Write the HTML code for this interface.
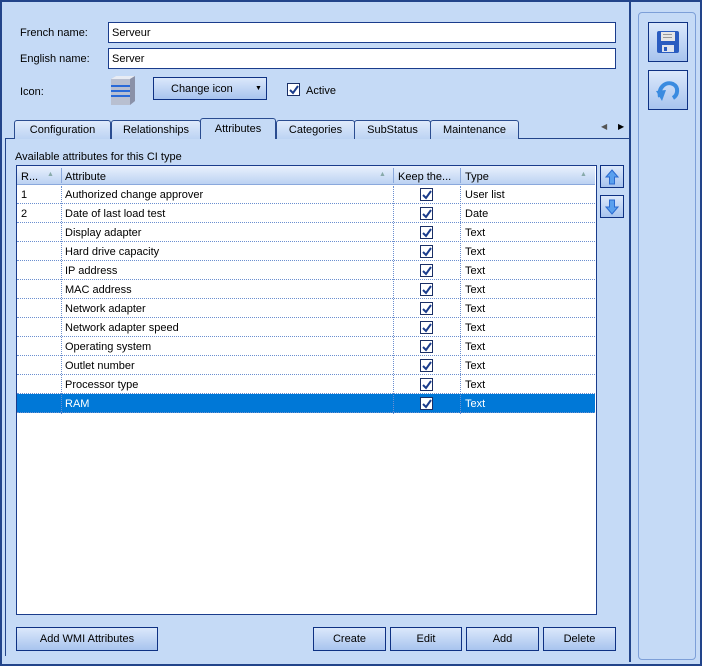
<!DOCTYPE html>
<html><head><style>
*{box-sizing:border-box;margin:0;padding:0}
body{width:702px;height:666px;position:relative;background:#c5daf6;font-family:"Liberation Sans",sans-serif;font-size:11px;color:#000;overflow:hidden}
.a{position:absolute}
.outer{left:0;top:0;width:702px;height:666px;border:2px solid #22448a;border-top-width:2px}
.inp{background:#fff;border:1px solid #1a3c8c;height:21px;padding:3px 3px;line-height:14px}
.btn{border:1px solid #0e3183;background:linear-gradient(#dbe8fb,#a8c4ee);text-align:center;line-height:21px}
.b24{line-height:23px}
.cb{width:13px;height:13px;border:1px solid #1a2f66;background:#fff}
.cb svg{position:absolute;left:1px;top:1px}
.tab{top:120px;height:19px;border:1px solid #2a4c90;border-bottom:none;background:linear-gradient(#dfeafb,#bcd3f3);text-align:center;line-height:18px;border-radius:3px 3px 0 0}
.row{left:17px;width:578px;height:19px;border-bottom:1px dotted #6b8fd0}
.row span{position:absolute;top:4px}
.vl{top:186px;width:0;height:228px;border-left:1px dotted #6b8fd0}
</style></head><body>
<div class="a outer"></div>
<div class="a" style="left:629px;top:2px;width:2px;height:660px;background:#22448a"></div>
<div class="a" style="left:638px;top:12px;width:58px;height:648px;border:1px solid #7d9fd8;border-radius:4px"></div>
<div class="a btn" style="left:648px;top:22px;width:40px;height:40px">
<svg width="26" height="26" viewBox="0 0 26 26" style="margin-top:6px"><rect x="2" y="2" width="22" height="22" rx="2" fill="#2a5cc0"/><rect x="6" y="3" width="14" height="9" fill="#e6e6e6"/><rect x="8" y="5" width="9" height="1" fill="#999"/><rect x="8" y="8" width="9" height="1" fill="#999"/><rect x="7" y="16" width="12" height="7" fill="#dfe4ee"/><rect x="9" y="18" width="3" height="4" fill="#2a5cc0"/></svg></div>
<div class="a btn" style="left:648px;top:70px;width:40px;height:40px">
<svg width="28" height="26" viewBox="0 0 28 26" style="margin-top:6px"><path d="M6 20 C4 10 12 4 19 7 C25 10 24 18 19 21" fill="none" stroke="#3a8be0" stroke-width="4"/><path d="M2 14 L8 24 L12 13 Z" fill="#3a8be0"/></svg></div>

<div class="a" style="left:20px;top:27px">French name:</div>
<div class="a inp" style="left:108px;top:22px;width:508px">Serveur</div>
<div class="a" style="left:20px;top:53px">English name:</div>
<div class="a inp" style="left:108px;top:48px;width:508px">Server</div>
<div class="a" style="left:20px;top:86px">Icon:</div>
<svg class="a" style="left:108px;top:75px" width="28" height="32" viewBox="0 0 28 32"><path d="M3 4 L8 1 L27 1 L27 26 L22 30 L3 30 Z" fill="#b8bfd0"/><path d="M3 4 L8 1 L27 1 L22 4 Z" fill="#e8ecf4"/><path d="M22 4 L27 1 L27 26 L22 30 Z" fill="#8a91a8"/><rect x="3" y="10" width="19" height="2" fill="#2a6ad8"/><rect x="3" y="15" width="19" height="2" fill="#2a6ad8"/><rect x="3" y="20" width="19" height="2" fill="#2a6ad8"/></svg>
<div class="a btn" style="left:153px;top:77px;width:114px;height:23px;text-align:left;padding-left:17px;line-height:22px">Change icon<span style="position:absolute;left:101px;top:0;font-size:7px">▼</span></div>
<div class="a cb" style="left:287px;top:83px"><svg width="10" height="10"><path d="M1 5 L4 8 L9 1" stroke="#1a3c8c" stroke-width="2" fill="none"/></svg></div>
<div class="a" style="left:306px;top:85px">Active</div>

<div class="a" style="left:5px;top:138px;width:626px;height:518px;border:1px solid #22448a;border-bottom:none;border-right:none"></div>
<div class="a tab" style="left:14px;width:97px">Configuration</div>
<div class="a tab" style="left:111px;width:90px">Relationships</div>
<div class="a tab" style="left:200px;width:76px;top:118px;height:21px;background:#c5daf6;z-index:2;line-height:20px">Attributes</div>
<div class="a tab" style="left:276px;width:79px">Categories</div>
<div class="a tab" style="left:354px;width:77px">SubStatus</div>
<div class="a tab" style="left:430px;width:89px">Maintenance</div>
<div class="a" style="left:601px;top:122px;font-size:8px;color:#555">◀</div>
<div class="a" style="left:618px;top:122px;font-size:8px">▶</div>

<div class="a" style="left:15px;top:151px">Available attributes for this CI type</div>
<div class="a" style="left:16px;top:165px;width:581px;height:450px;background:#fff;border:1px solid #1a3c8c"></div>
<div class="a" style="left:17px;top:166px;width:578px;height:19px;background:linear-gradient(#e9f1fd,#bcd2f2);border-bottom:1px solid #8aa8dc"></div>
<div class="a" style="left:21px;top:171px">R...</div><div class="a" style="left:47px;top:171px;font-size:7px;color:#8aa">▲</div>
<div class="a" style="left:61px;top:168px;width:1px;height:15px;background:#8aa8dc"></div>
<div class="a" style="left:65px;top:171px">Attribute</div><div class="a" style="left:379px;top:171px;font-size:7px;color:#8aa">▲</div>
<div class="a" style="left:393px;top:168px;width:1px;height:15px;background:#8aa8dc"></div>
<div class="a" style="left:398px;top:171px">Keep the...</div>
<div class="a" style="left:460px;top:168px;width:1px;height:15px;background:#8aa8dc"></div>
<div class="a" style="left:465px;top:171px">Type</div><div class="a" style="left:580px;top:171px;font-size:7px;color:#8aa">▲</div>

<div class="a" style="left:17px;top:394px;width:578px;height:19px;background:#0078d7"></div>
<div class="a vl" style="left:61px"></div><div class="a vl" style="left:393px"></div><div class="a vl" style="left:460px"></div>

<div class="a row" style="top:185px"><span style="left:4px">1</span><span style="left:48px">Authorized change approver</span><span style="left:448px">User list</span></div>
<div class="a row" style="top:204px"><span style="left:4px">2</span><span style="left:48px">Date of last load test</span><span style="left:448px">Date</span></div>
<div class="a row" style="top:223px"><span style="left:48px">Display adapter</span><span style="left:448px">Text</span></div>
<div class="a row" style="top:242px"><span style="left:48px">Hard drive capacity</span><span style="left:448px">Text</span></div>
<div class="a row" style="top:261px"><span style="left:48px">IP address</span><span style="left:448px">Text</span></div>
<div class="a row" style="top:280px"><span style="left:48px">MAC address</span><span style="left:448px">Text</span></div>
<div class="a row" style="top:299px"><span style="left:48px">Network adapter</span><span style="left:448px">Text</span></div>
<div class="a row" style="top:318px"><span style="left:48px">Network adapter speed</span><span style="left:448px">Text</span></div>
<div class="a row" style="top:337px"><span style="left:48px">Operating system</span><span style="left:448px">Text</span></div>
<div class="a row" style="top:356px"><span style="left:48px">Outlet number</span><span style="left:448px">Text</span></div>
<div class="a row" style="top:375px"><span style="left:48px">Processor type</span><span style="left:448px">Text</span></div>
<div class="a row" style="top:394px;color:#fff"><span style="left:48px">RAM</span><span style="left:448px">Text</span></div>

<div class="a cb" style="left:420px;top:188px"><svg width="10" height="10"><path d="M1 5 L4 8 L9 1" stroke="#1a3c8c" stroke-width="2" fill="none"/></svg></div>
<div class="a cb" style="left:420px;top:207px"><svg width="10" height="10"><path d="M1 5 L4 8 L9 1" stroke="#1a3c8c" stroke-width="2" fill="none"/></svg></div>
<div class="a cb" style="left:420px;top:226px"><svg width="10" height="10"><path d="M1 5 L4 8 L9 1" stroke="#1a3c8c" stroke-width="2" fill="none"/></svg></div>
<div class="a cb" style="left:420px;top:245px"><svg width="10" height="10"><path d="M1 5 L4 8 L9 1" stroke="#1a3c8c" stroke-width="2" fill="none"/></svg></div>
<div class="a cb" style="left:420px;top:264px"><svg width="10" height="10"><path d="M1 5 L4 8 L9 1" stroke="#1a3c8c" stroke-width="2" fill="none"/></svg></div>
<div class="a cb" style="left:420px;top:283px"><svg width="10" height="10"><path d="M1 5 L4 8 L9 1" stroke="#1a3c8c" stroke-width="2" fill="none"/></svg></div>
<div class="a cb" style="left:420px;top:302px"><svg width="10" height="10"><path d="M1 5 L4 8 L9 1" stroke="#1a3c8c" stroke-width="2" fill="none"/></svg></div>
<div class="a cb" style="left:420px;top:321px"><svg width="10" height="10"><path d="M1 5 L4 8 L9 1" stroke="#1a3c8c" stroke-width="2" fill="none"/></svg></div>
<div class="a cb" style="left:420px;top:340px"><svg width="10" height="10"><path d="M1 5 L4 8 L9 1" stroke="#1a3c8c" stroke-width="2" fill="none"/></svg></div>
<div class="a cb" style="left:420px;top:359px"><svg width="10" height="10"><path d="M1 5 L4 8 L9 1" stroke="#1a3c8c" stroke-width="2" fill="none"/></svg></div>
<div class="a cb" style="left:420px;top:378px"><svg width="10" height="10"><path d="M1 5 L4 8 L9 1" stroke="#1a3c8c" stroke-width="2" fill="none"/></svg></div>
<div class="a cb" style="left:420px;top:397px"><svg width="10" height="10"><path d="M1 5 L4 8 L9 1" stroke="#1a3c8c" stroke-width="2" fill="none"/></svg></div>

<div class="a btn" style="left:600px;top:165px;width:24px;height:23px"><svg width="14" height="16" viewBox="0 0 14 16" style="margin-top:3px"><path d="M7 1 L13 8 L9.5 8 L9.5 15 L4.5 15 L4.5 8 L1 8 Z" fill="#5aa0ee" stroke="#2a6ad0"/></svg></div>
<div class="a btn" style="left:600px;top:195px;width:24px;height:23px"><svg width="14" height="16" viewBox="0 0 14 16" style="margin-top:3px"><path d="M7 15 L13 8 L9.5 8 L9.5 1 L4.5 1 L4.5 8 L1 8 Z" fill="#5aa0ee" stroke="#2a6ad0"/></svg></div>

<div class="a btn b24" style="left:16px;top:627px;width:142px;height:24px">Add WMI Attributes</div>
<div class="a btn b24" style="left:313px;top:627px;width:73px;height:24px">Create</div>
<div class="a btn b24" style="left:390px;top:627px;width:72px;height:24px">Edit</div>
<div class="a btn b24" style="left:466px;top:627px;width:73px;height:24px">Add</div>
<div class="a btn b24" style="left:543px;top:627px;width:73px;height:24px">Delete</div>
</body></html>
